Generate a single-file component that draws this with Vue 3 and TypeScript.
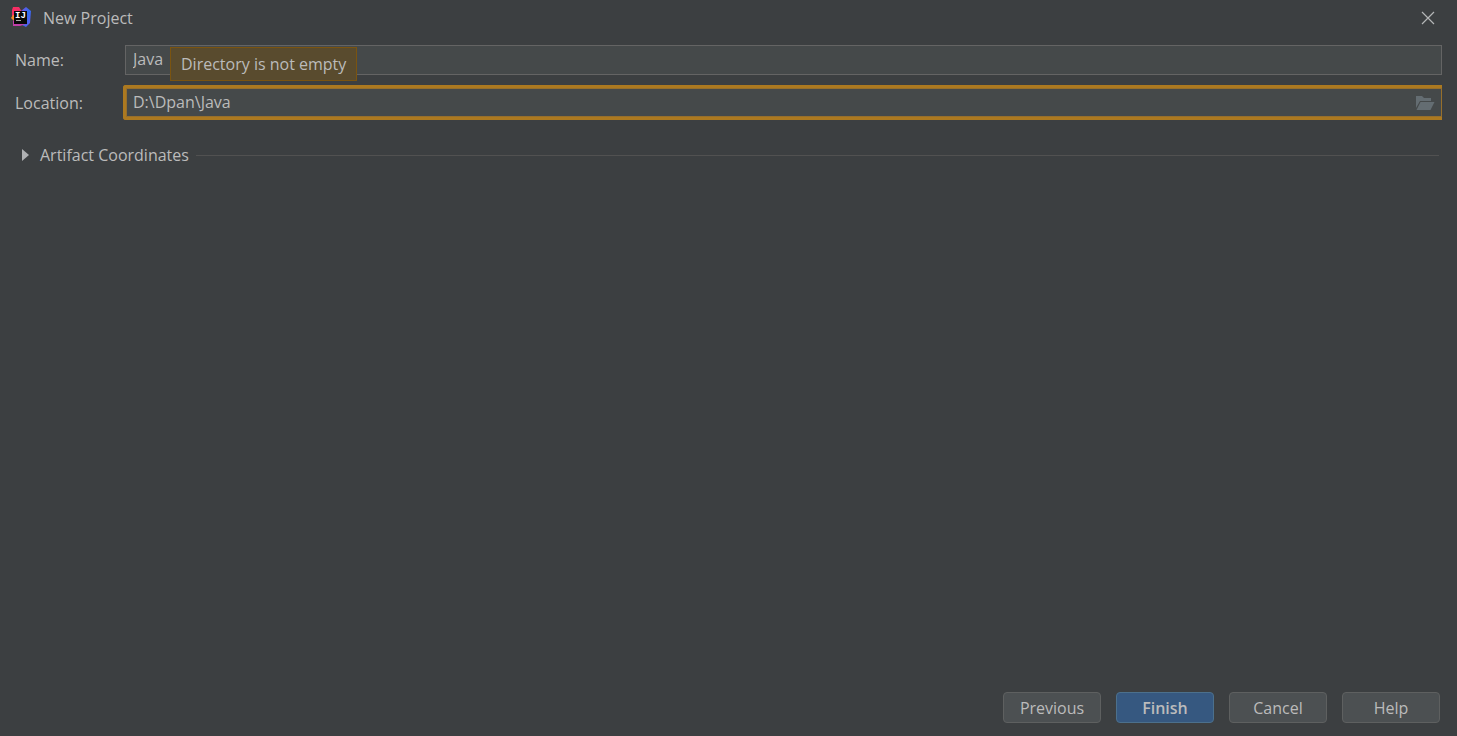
<script setup lang="ts">
import { ref } from 'vue'

const name = ref<string>('Java')
const location = ref<string>('D:\\Dpan\\Java')
const expanded = ref<boolean>(false)
const buttons: { label: string; primary?: boolean }[] = [
  { label: 'Previous' },
  { label: 'Finish', primary: true },
  { label: 'Cancel' },
  { label: 'Help' },
]
</script>

<template>
  <div class="dialog">
    <header class="titlebar">
      <svg class="logo" width="22" height="22" viewBox="0 0 22 22" aria-hidden="true">
        <defs>
          <linearGradient id="warm" x1="0" y1="0" x2="1" y2="1">
            <stop offset="0" stop-color="#fe2d5c" />
            <stop offset="1" stop-color="#e0307c" />
          </linearGradient>
          <linearGradient id="cool" x1="0" y1="0" x2="1" y2="1">
            <stop offset="0" stop-color="#8a4be0" />
            <stop offset="0.5" stop-color="#2f6df0" />
            <stop offset="1" stop-color="#6a55e8" />
          </linearGradient>
        </defs>
        <path d="M11 4 L16 0 L21 4 L20 16 L16 20 L10 17 Z" fill="url(#cool)" />
        <path d="M3 0 L9 0 L12 5 L6 12 L2 9 L2 3 Z" fill="url(#warm)" />
        <path d="M3 8 L5 8 L5 15 L1 11 Z" fill="#f58529" />
        <path d="M3 13 L6 16 L16 17 L10 19 L3 19 Z" fill="#c03fa8" />
        <rect x="4" y="4" width="13" height="13" fill="#080808" />
        <text x="5" y="11" class="logo-text">IJ</text>
        <rect x="6" y="13" width="5" height="1" fill="#a8a8a8" />
      </svg>
      <h1 class="title">New Project</h1>
      <button class="close" type="button" aria-label="Close">
        <svg width="14" height="14" viewBox="0 0 14 14" aria-hidden="true">
          <path d="M1 1 L13 13 M13 1 L1 13" stroke="#b4b6b7" stroke-width="1.2" fill="none" />
        </svg>
      </button>
    </header>

    <main class="form">
      <div class="row">
        <label for="name">Name:</label>
        <div class="field">
          <input id="name" v-model="name" type="text" />
          <div class="tooltip" role="alert">Directory is not empty</div>
        </div>
      </div>
      <div class="row">
        <label for="location">Location:</label>
        <div class="field warning">
          <input id="location" v-model="location" type="text" />
          <button class="browse" type="button" aria-label="Browse">
            <svg width="20" height="16" viewBox="0 0 20 16" aria-hidden="true">
              <path d="M1 1 H7 L9 3 H16 V6 H5 L1 13 Z" fill="#646d72" />
              <path d="M5.5 7 H19.5 L15.5 15 H1.5 Z" fill="#646d72" />
            </svg>
          </button>
        </div>
      </div>
      <div class="section">
        <button class="toggle" type="button" :aria-expanded="expanded" @click="expanded = !expanded">
          <svg width="8" height="12" viewBox="0 0 8 12" aria-hidden="true">
            <path d="M0 0 L7 6 L0 12 Z" fill="#afb1b3" />
          </svg>
          Artifact Coordinates
        </button>
        <div class="rule"></div>
      </div>
    </main>

    <footer class="actions">
      <button
        v-for="b in buttons"
        :key="b.label"
        type="button"
        class="action"
        :class="{ primary: b.primary }"
      >{{ b.label }}</button>
    </footer>
  </div>
</template>

<style>
body {
  margin: 0;
  background: #3c3f41;
}
</style>

<style scoped>
.dialog {
  box-sizing: border-box;
  min-height: 100vh;
  display: flex;
  flex-direction: column;
  background: #3c3f41;
  color: #bbbbbb;
  font: 16px/24px "Open Sans", "Noto Sans", sans-serif;
}
button,
input {
  font: inherit;
  color: inherit;
  box-sizing: border-box;
  margin: 0;
}
.titlebar {
  display: flex;
  align-items: center;
  height: 36px;
  padding: 0 22px 0 10px;
}
.logo-text {
  font: bold 9px "Liberation Mono", monospace;
  fill: #ffffff;
}
.title {
  flex: 1;
  margin: 0 0 0 11px;
  font: inherit;
}
.close {
  display: flex;
  padding: 0;
  border: 0;
  background: none;
}
.form {
  flex: 1;
  padding: 9px 15px 0;
}
.row {
  display: flex;
  align-items: center;
  margin-bottom: 10px;
}
.row label {
  width: 110px;
}
.field {
  position: relative;
  display: flex;
  flex: 1;
}
.field input {
  width: 100%;
  height: 30px;
  padding: 0 7px 2px;
  border: 1px solid #646464;
  border-radius: 0;
  outline: none;
  background: #45494a;
}
.field.warning {
  margin-left: -2px;
}
.field.warning input {
  height: 35px;
  padding: 0 36px 1px 7px;
  border: 3px solid #ac7920;
  border-right: 0;
  border-radius: 3px 0 0 3px;
  box-shadow: inset 0 0 0 1px #976f2c;
}
.browse {
  position: absolute;
  right: 7px;
  top: 10px;
  display: flex;
  padding: 0;
  border: 0;
  background: none;
}
.tooltip {
  position: absolute;
  z-index: 1;
  left: 45px;
  top: 2px;
  padding: 4px 10px;
  border: 1px solid #7b5410;
  background: #594b2e;
  white-space: nowrap;
}
.section {
  display: flex;
  align-items: center;
  gap: 7px;
  margin-top: 23px;
  padding: 0 3px 0 7px;
}
.toggle {
  display: flex;
  align-items: center;
  gap: 10px;
  padding: 0;
  border: 0;
  background: none;
}
.rule {
  flex: 1;
  height: 1px;
  background: #515151;
}
.actions {
  display: flex;
  justify-content: flex-end;
  gap: 15px;
  padding: 0 17px 13px;
}
.action {
  width: 98px;
  height: 31px;
  padding: 0;
  border: 1px solid #5e6060;
  border-radius: 4px;
  background: #4c5052;
}
.action.primary {
  border-color: #4c708c;
  background: #365880;
  font-weight: 600;
}
</style>
